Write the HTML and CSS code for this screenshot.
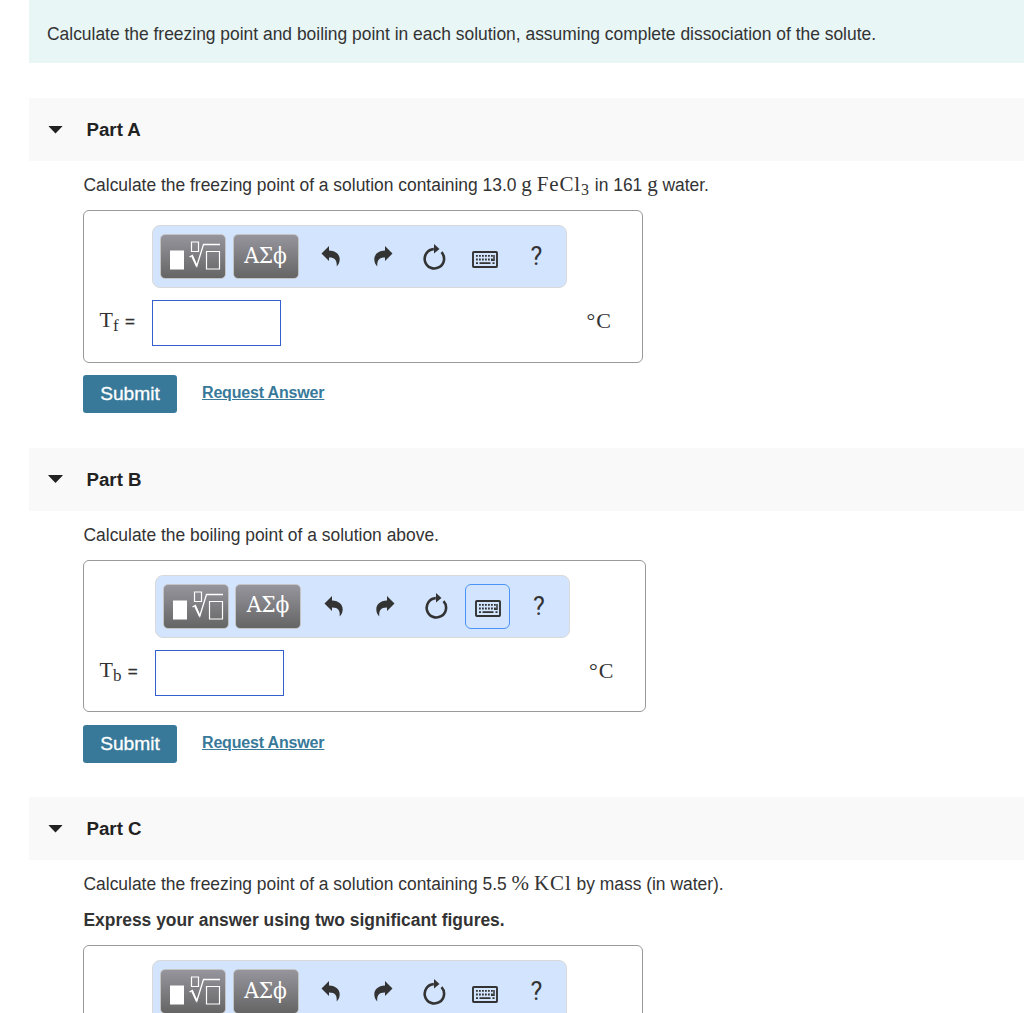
FILE: index.html
```
<!DOCTYPE html>
<html lang="en">
<head>
  <meta charset="UTF-8">
  <title>Freezing and Boiling Points</title>
  <meta name="viewport" content="width=device-width, initial-scale=1.0">
  <link rel="stylesheet" href="styles.css">
</head>
<body>
  <svg class="sprite" width="0" height="0">
    <symbol id="templates" viewBox="0 0 65 44">
      <path d="M9 15.500h14v19h-14z" fill="#fff"/>
      <path d="M30.500 7h7v9.500h-7z M45.500 16.500h13v17.500h-13z" fill="none" stroke="#fff" stroke-width="1.200"/>
      <path d="M28.500 22l2.800-1.500 4.500 10.500 6.700-21.500H59" fill="none" stroke="#fff" stroke-width="1.300"/>
      <path d="M31 21l4.700 10" stroke="#fff" stroke-width="1.800"/>
    </symbol>
    <symbol id="undo" viewBox="0 0 20 21">
      <path d="M.500 7.500L8 0v4.500c7 .3 10.700 4 10.700 8.700 0 3.200-1.300 5.500-3 7.300.5-5.800-1.500-9-7.700-8.900V15z" fill="#333"/>
    </symbol>
    <symbol id="reset" viewBox="0 0 24 26">
      <path d="M19.500 8.200a9.700 9.700 0 1 1-7.700-3.100" fill="none" stroke="#333" stroke-width="2.600"/>
      <path d="M12 0l5.500 5-5.500 4.500z" fill="#333"/>
    </symbol>
    <symbol id="keyboard" viewBox="0 0 26 17">
      <rect x="1" y="1" width="24" height="15" rx=".8" fill="none" stroke="#333" stroke-width="1.900"/>
      <path d="M4 4.900h17M4 8.500h17" stroke="#333" stroke-width="1.800" stroke-dasharray="1.800 1.200"/>
      <path d="M22 4v5.300h-3" fill="none" stroke="#333" stroke-width="1.500"/>
      <path d="M4 12.200h2M7.500 12.200h11M20.500 12.200h2" stroke="#333" stroke-width="1.800"/>
    </symbol>
  </svg>

  <div class="intro">Calculate the freezing point and boiling point in each solution, assuming complete dissociation of the solute.</div>

  <section class="part">
    <div class="part-header"><span class="arrow"></span><h2>Part A</h2></div>
    <div class="part-body">
      <p class="question">Calculate the freezing point of a solution containing 13.0 <span class="math">g</span> <span class="math formula">FeCl<sub>3</sub></span> in 161 <span class="math">g</span> water.</p>
      <div class="answer">
        <div class="toolbar">
          <button class="palette"><svg width="65" height="44"><use href="#templates"/></svg></button>
          <button class="palette greek">ΑΣϕ</button>
          <button class="tool"><svg width="20" height="21"><use href="#undo"/></svg></button>
          <button class="tool redo"><svg width="20" height="21"><use href="#undo"/></svg></button>
          <button class="tool reset"><svg width="24" height="26"><use href="#reset"/></svg></button>
          <button class="tool keys"><svg width="26" height="17"><use href="#keyboard"/></svg></button>
          <button class="tool help">?</button>
        </div>
        <label class="variable" for="tf"><span class="math">T<sub>f</sub></span> <span class="equals">=</span></label>
        <input id="tf" type="text">
        <span class="unit math"><span class="degree">°</span>C</span>
      </div>
      <div class="actions">
        <button class="submit">Submit</button>
        <a class="request" href="#">Request Answer</a>
      </div>
    </div>
  </section>

  <section class="part">
    <div class="part-header"><span class="arrow"></span><h2>Part B</h2></div>
    <div class="part-body">
      <p class="question">Calculate the boiling point of a solution above.</p>
      <div class="answer wide">
        <div class="toolbar">
          <button class="palette"><svg width="65" height="44"><use href="#templates"/></svg></button>
          <button class="palette greek">ΑΣϕ</button>
          <button class="tool"><svg width="20" height="21"><use href="#undo"/></svg></button>
          <button class="tool redo"><svg width="20" height="21"><use href="#undo"/></svg></button>
          <button class="tool reset"><svg width="24" height="26"><use href="#reset"/></svg></button>
          <button class="tool keys active"><svg width="26" height="17"><use href="#keyboard"/></svg></button>
          <button class="tool help">?</button>
        </div>
        <label class="variable" for="tb"><span class="math">T<sub>b</sub></span> <span class="equals">=</span></label>
        <input id="tb" type="text">
        <span class="unit math"><span class="degree">°</span>C</span>
      </div>
      <div class="actions">
        <button class="submit">Submit</button>
        <a class="request" href="#">Request Answer</a>
      </div>
    </div>
  </section>

  <section class="part last">
    <div class="part-header"><span class="arrow"></span><h2>Part C</h2></div>
    <div class="part-body">
      <p class="question">Calculate the freezing point of a solution containing 5.5 <span class="math">%</span> <span class="math salt">KCl</span> by mass (in water).</p>
      <p class="hint">Express your answer using two significant figures.</p>
      <div class="answer">
        <div class="toolbar">
          <button class="palette"><svg width="65" height="44"><use href="#templates"/></svg></button>
          <button class="palette greek">ΑΣϕ</button>
          <button class="tool"><svg width="20" height="21"><use href="#undo"/></svg></button>
          <button class="tool redo"><svg width="20" height="21"><use href="#undo"/></svg></button>
          <button class="tool reset"><svg width="24" height="26"><use href="#reset"/></svg></button>
          <button class="tool keys"><svg width="26" height="17"><use href="#keyboard"/></svg></button>
          <button class="tool help">?</button>
        </div>
      </div>
    </div>
  </section>
</body>
</html>
```
FILE: styles.css
```
* {
  box-sizing: border-box;
}
body {
  margin: 0;
  padding-left: 29px;
  background: #fff;
  color: #333;
  font-family: "Liberation Sans", Arial, sans-serif;
  font-size: 17.430px;
}
button {
  font-family: inherit;
  color: #333;
  padding: 0;
  border: none;
  background: none;
  cursor: pointer;
}
svg {
  display: block;
}
.sprite {
  position: absolute;
}
.intro {
  height: 63px;
  padding: 24px 18px 0;
  line-height: 20px;
  background: #e8f6f6;
}
.part {
  height: 314.500px;
  margin-top: 35px;
}
.part.last {
  height: 216px;
  overflow: hidden;
}
.part-header {
  height: 63px;
  display: flex;
  align-items: center;
  padding-left: 19px;
  background: #f9f9f9;
}
.arrow {
  width: 15px;
  height: 8px;
  background: #222;
  clip-path: polygon(0 0, 100% 0, 90% 22%, 50% 100%, 10% 22%);
}
h2 {
  margin: 1px 0 0 23.500px;
  font-size: 18.700px;
  line-height: 22px;
  color: #222;
}
.part-body {
  padding-left: 54px;
}
.question {
  margin: 0;
  padding: 13px 0 0 .5px;
  height: 49px;
  line-height: 22px;
  white-space: nowrap;
}
.hint {
  margin: 0;
  padding: 1px 0 0 .5px;
  height: 36px;
  line-height: 21px;
  font-weight: bold;
}
.math {
  font-family: "Liberation Serif", "Times New Roman", serif;
  font-size: 21px;
  line-height: 1;
}
.math sub {
  font-size: 16px;
  line-height: 0;
  vertical-align: -4px;
}
.formula {
  letter-spacing: .9px;
}
.salt {
  letter-spacing: .9px;
}
.answer {
  width: 560px;
  height: 152.500px;
  display: grid;
  grid-template-columns: 53px 129px 1fr;
  grid-template-rows: 63px 46px;
  row-gap: 12px;
  padding: 14px 15px 0;
  border: 1px solid #999;
  border-radius: 6px;
}
.answer.wide {
  width: 563px;
  grid-template-columns: 55.500px 129px 1fr;
}
.toolbar {
  grid-column: 2 / 4;
  width: 415px;
  height: 63px;
  display: flex;
  align-items: center;
  padding-left: 7px;
  background: #d3e5fe;
  border: 1px solid #d9d9d9;
  border-radius: 8px;
}
.palette {
  width: 66px;
  height: 45px;
  margin-right: 6.500px;
  border: 1px solid #c4c4c4;
  border-radius: 5px;
  background: linear-gradient(#96959d, #656565);
  color: #fff;
  overflow: hidden;
}
.greek {
  margin-right: 4px;
  font-family: "DejaVu Serif Condensed", "DejaVu Serif", serif;
  font-stretch: condensed;
  font-size: 22.500px;
  line-height: 38px;
  padding-bottom: 4px;
}
.tool {
  width: 45px;
  height: 45px;
  margin-left: 6.300px;
  display: flex;
  flex: none;
  align-items: center;
  justify-content: center;
  border: 1px solid transparent;
  border-radius: 6px;
}
.redo svg {
  transform: scaleX(-1);
}
.keys svg {
  margin-top: 5px;
}
.tool.active {
  border-color: #4b93f5;
}
.help {
  font-family: Roboto, sans-serif;
  font-size: 25px;
}
.variable {
  grid-column: 1;
  padding: 9px 0 0 .5px;
  white-space: nowrap;
  line-height: 24px;
}
.variable .math {
  font-size: 22px;
}
.variable sub {
  font-size: 17px;
}
.equals {
  margin-left: 1.500px;
  font-size: 17px;
  -webkit-text-stroke: .3px #333;
}
input {
  width: 129px;
  height: 46px;
  border: 1px solid #3360cc;
  background: #fff;
}
.unit {
  grid-column: 3;
  padding: 10px 0 0 305.500px;
  font-size: 22px;
}
.degree {
  letter-spacing: 1px;
}
.actions {
  display: flex;
  align-items: flex-start;
  padding-top: 12.500px;
}
.submit {
  width: 94px;
  height: 38px;
  border-radius: 3px;
  background: #38799a;
  color: #fff;
  font-size: 19.200px;
  -webkit-text-stroke: .3px #fff;
}
.request {
  margin: 8px 0 0 25px;
  color: #38799a;
  font-size: 16px;
  letter-spacing: -.17px;
  font-weight: bold;
  line-height: 20px;
}
```
